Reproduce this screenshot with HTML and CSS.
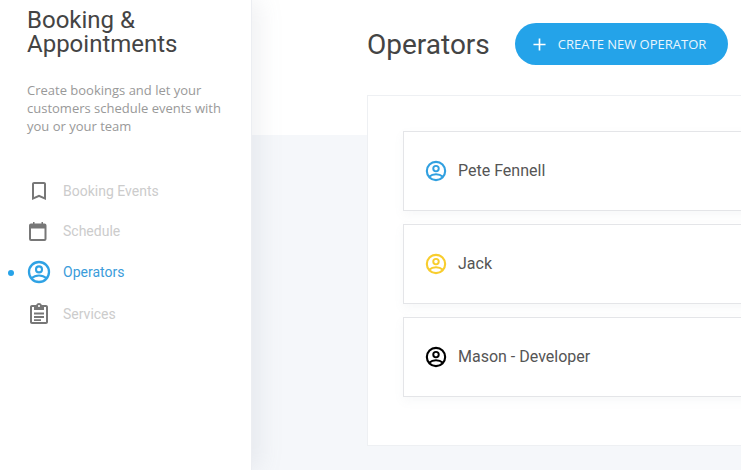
FILE: index.html
```html
<!DOCTYPE html>
<html lang="en">
<head>
<meta charset="utf-8">
<title>Operators</title>
<link rel="stylesheet" href="styles.css">
</head>
<body>
<div class="app">
  <aside class="sidebar">
    <h1 class="side-title">Booking &amp; Appointments</h1>
    <p class="side-desc">Create bookings and let your customers schedule events with you or your team</p>
    <nav class="nav">
      <a class="nav-item nav-booking">
        <svg class="nav-icon" viewBox="0 0 24 24"><path fill="currentColor" d="M17 3H7c-1.1 0-2 .9-2 2v16l7-3 7 3V5c0-1.1-.9-2-2-2zm0 15-5-2.18L7 18V5h10v13z"/></svg>
        <span>Booking Events</span>
      </a>
      <a class="nav-item nav-schedule">
        <svg class="nav-icon" viewBox="0 0 24 24"><path fill="currentColor" d="M17.500 4.500H16V3h-1.500v1.500H7.500V3H6v1.500H4a2 2 0 0 0-2 2V20a2 2 0 0 0 2 2h13.500a2 2 0 0 0 2-2V6.500a2 2 0 0 0-2-2zm0 15.500H4V9.500h13.500V20z"/></svg>
        <span>Schedule</span>
      </a>
      <a class="nav-item nav-active">
        <svg class="nav-icon" viewBox="0 0 24 24"><use href="#person"/></svg>
        <span>Operators</span>
      </a>
      <a class="nav-item nav-services">
        <svg class="nav-icon" viewBox="0 0 24 24"><path fill="currentColor" d="M19 3h-4.18C14.4 1.84 13.3 1 12 1s-2.4.84-2.82 2H5c-1.1 0-2 .9-2 2v15c0 1.1.9 2 2 2h14c1.1 0 2-.9 2-2V5c0-1.1-.9-2-2-2zm-7 0c.55 0 1 .45 1 1s-.45 1-1 1-1-.45-1-1 .45-1 1-1zm7 17H5V5h2v3h10V5h2v15zM7 10.500h10v2H7zM7 14h10v2H7zM7 17.200h7v1.800H7z"/></svg>
        <span>Services</span>
      </a>
    </nav>
  </aside>
  <main class="main">
    <header class="head">
      <h2 class="page-title">Operators</h2>
      <button class="create-btn" type="button">
        <svg class="plus" viewBox="0 0 14 14"><path d="M7 .5v13M.5 7h13" stroke="currentColor" stroke-width="1.8" fill="none"/></svg>
        <span>CREATE NEW OPERATOR</span>
      </button>
    </header>
    <section class="panel">
      <div class="row">
        <svg class="row-icon icon-blue" viewBox="0 0 24 24"><use href="#person"/></svg>
        <span class="row-name">Pete Fennell</span>
      </div>
      <div class="row">
        <svg class="row-icon icon-yellow" viewBox="0 0 24 24"><use href="#person"/></svg>
        <span class="row-name">Jack</span>
      </div>
      <div class="row">
        <svg class="row-icon icon-black" viewBox="0 0 24 24"><use href="#person"/></svg>
        <span class="row-name">Mason - Developer</span>
      </div>
    </section>
  </main>
</div>
<svg class="defs" width="0" height="0">
  <defs>
    <g id="person">
      <circle cx="12" cy="12" r="10" fill="none" stroke="currentColor" stroke-width="2.300"/>
      <circle cx="12" cy="9.400" r="3" fill="none" stroke="currentColor" stroke-width="2.100"/>
      <path d="M4.500 18.300c2-1.800 4.700-2.800 7.500-2.800s5.500 1 7.500 2.800" fill="none" stroke="currentColor" stroke-width="2.100"/>
    </g>
  </defs>
</svg>
</body>
</html>
```
FILE: styles.css
```css
* { box-sizing: border-box; }
html, body { margin: 0; height: 100%; overflow: hidden; }
body { background: #f5f7fa; font-family: Roboto, sans-serif; color: #444; }
.defs { position: absolute; }
.app { display: flex; width: 741px; height: 470px; overflow: hidden; }

.sidebar {
  flex: 0 0 252px;
  height: 470px;
  background: #fff;
  border-right: 1px solid #eceef2;
  box-shadow: 8px 0 22px rgba(140, 148, 160, 0.13);
  padding: 8px 24px 0 27px;
  position: relative;
  z-index: 2;
}
.side-title { margin: 0; font-size: 24px; line-height: 24px; font-weight: 400; color: #444; }
.side-desc {
  margin: 25px 0 0;
  font-family: "Open Sans", sans-serif;
  font-size: 13px;
  line-height: 18px;
  color: #999;
}
.nav { margin-top: 44px; display: flex; flex-direction: column; }
.nav-item {
  display: flex;
  align-items: center;
  gap: 12px;
  height: 24px;
  font-size: 14px;
  color: #ccc;
  position: relative;
}
.nav-item .nav-icon { color: #777; }
.nav-icon { width: 24px; height: 24px; flex: none; }
.nav-schedule { margin-top: 16px; }
.nav-active { margin-top: 17px; color: #3a9cda; }
.nav-active .nav-icon { color: #2fa2e4; }
.nav-active::before {
  content: "";
  position: absolute;
  left: -19px;
  top: 10px;
  width: 6px;
  height: 6px;
  border-radius: 50%;
  background: #27a3e8;
}
.nav-services { margin-top: 18px; }

.main {
  flex: 1 0 auto;
  min-width: 0;
  background: linear-gradient(#fff 135px, transparent 135px);
  padding: 23px 0 0 115px;
}
.head { display: flex; align-items: center; height: 42px; gap: 25px; }
.page-title { margin: 0; padding-top: 2px; font-size: 28px; line-height: 40px; font-weight: 400; color: #444; }
.create-btn {
  width: 213px;
  height: 42px;
  border: 0;
  border-radius: 21px;
  background: #24a3e9;
  color: #e9f6fd;
  display: flex;
  align-items: center;
  padding: 0 0 0 18px;
  gap: 12px;
  font-family: "Open Sans", sans-serif;
  font-size: 13px;
  white-space: nowrap;
}
.plus { width: 13px; height: 13px; color: #fff; flex: none; }

.panel {
  margin-top: 30px;
  width: 500px;
  height: 351px;
  background: #fff;
  border: 1px solid #eef0f3;
  padding: 35px 0 0 35px;
  display: flex;
  flex-direction: column;
  gap: 13px;
}
.row {
  width: 440px;
  height: 80px;
  flex: none;
  background: #fff;
  border: 1px solid #e4e5e8;
  box-shadow: 0 4px 10px rgba(120, 130, 150, 0.06);
  display: flex;
  align-items: center;
  padding-left: 21px;
  gap: 11px;
  font-size: 16px;
  color: #555;
}
.row-name { padding-bottom: 2px; }
.row-icon { width: 22px; height: 22px; flex: none; }
.icon-blue { color: #31a0e0; }
.icon-yellow { color: #f8cd2e; }
.icon-black { color: #000; }
```
